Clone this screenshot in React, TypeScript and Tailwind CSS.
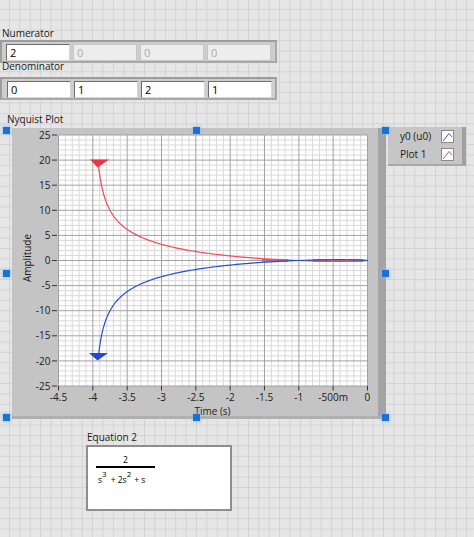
import React from 'react'

// ── Plot mapping (page coordinates) ─────────────────────────────────────────
const X0 = 367.5 // x = 0
const XS = 68.67 // px per unit
const Y0 = 260.5 // y = 0
const YS = 5.02 // px per unit
const px = (x: number) => X0 + x * XS
const py = (y: number) => Y0 - y * YS

function curve(sign: 1 | -1, wStart: number) {
  const pts: string[] = []
  const n = 400
  for (let i = 0; i <= n; i++) {
    const w = wStart * Math.pow(200 / wStart, i / n)
    const d = (1 + w * w) * (1 + w * w)
    const re = -4 / d
    const im = (sign * 2 * (1 - w * w)) / (w * d)
    pts.push(`${px(re).toFixed(2)},${py(im).toFixed(2)}`)
  }
  return 'M' + pts.join(' L')
}

const xTicks = ['-4.5', '-4', '-3.5', '-3', '-2.5', '-2', '-1.5', '-1', '-500m', '0']
const yTicks = ['25', '20', '15', '10', '5', '0', '-5', '-10', '-15', '-20', '-25']

function Cell({ value, disabled }: { value: string; disabled?: boolean }) {
  return disabled ? (
    <div className="h-[17px] w-[64px] border border-[#c6c6c6] bg-[#ededed] pl-[3px] text-[11px] leading-[15px] text-[#ababab]">
      {value}
    </div>
  ) : (
    <div className="h-[17px] w-[64px] border border-t-[#6d6d6d] border-l-[#6d6d6d] border-r-[#d6d6d6] border-b-[#d6d6d6] bg-white pl-[3px] text-[11px] leading-[15px] text-black">
      {value}
    </div>
  )
}

function Handle({ className }: { className: string }) {
  return (
    <div
      className={`absolute h-[7px] w-[7px] bg-[#1a72d6] shadow-[0_0_3px_1px_rgba(140,190,240,0.7)] ${className}`}
    />
  )
}

function LegendIcon({ color }: { color: string }) {
  return (
    <div className="h-[13px] w-[13px] border border-[#8a8a8a] bg-white">
      <svg width="11" height="11" viewBox="0 0 11 11">
        <polyline points="1,10 7,2.5 10,6" fill="none" stroke={color} strokeWidth="1" />
      </svg>
    </div>
  )
}

function Chart() {
  const minorX: number[] = []
  for (let i = 0; i <= 45; i++) minorX.push(58.5 + (i * XS) / 10)
  const minorY: number[] = []
  for (let i = 0; i <= 50; i++) minorY.push(135 + i * YS)

  return (
    <svg width="366" height="288" viewBox="12 128 366 288" className="block">
      {/* plot area */}
      <rect x="58" y="135" width="310" height="251" fill="#ffffff" />
      {minorX.map((x, i) =>
        i % 5 !== 0 ? <line key={`mx${i}`} x1={x} y1="135" x2={x} y2="386" stroke="#d9d9d9" strokeWidth="1" /> : null,
      )}
      {minorY.map((y, i) =>
        i % 5 !== 0 ? <line key={`my${i}`} x1="58" y1={y} x2="368" y2={y} stroke="#d9d9d9" strokeWidth="1" /> : null,
      )}
      {minorX.map((x, i) =>
        i % 5 === 0 ? <line key={`Mx${i}`} x1={x} y1="135" x2={x} y2="386" stroke="#a2a2a2" strokeWidth="1" /> : null,
      )}
      {minorY.map((y, i) =>
        i % 5 === 0 ? <line key={`My${i}`} x1="58" y1={y} x2="368" y2={y} stroke="#a2a2a2" strokeWidth="1" /> : null,
      )}

      {/* y axis */}
      {yTicks.map((t, i) => {
        const y = 135 + i * 25.1
        return (
          <g key={t}>
            <line x1="52" y1={y} x2="57" y2={y} stroke="#333" strokeWidth="1" />
            <text x="50.5" y={y + 3.6} textAnchor="end" fontSize="10" fill="#1a1a1a" fontFamily="'Open Sans', sans-serif">
              {t}
            </text>
          </g>
        )
      })}
      <text
        transform="translate(30.5 258) rotate(-90)"
        textAnchor="middle"
        fontSize="10"
        fill="#1a1a1a"
        fontFamily="'Open Sans', sans-serif"
      >
        Amplitude
      </text>

      {/* x axis */}
      {xTicks.map((t, i) => {
        const x = 58.5 + i * 34.33
        return (
          <g key={t}>
            <line x1={x} y1="386" x2={x} y2="390.5" stroke="#333" strokeWidth="1" />
            <text x={x} y="401" textAnchor="middle" fontSize="10" fill="#1a1a1a" fontFamily="'Open Sans', sans-serif">
              {t}
            </text>
          </g>
        )
      })}
      <text x="212.5" y="414.5" textAnchor="middle" fontSize="10" fill="#1a1a1a" fontFamily="'Open Sans', sans-serif">
        Time (s)
      </text>

      {/* curves */}
      <svg x="58" y="135" width="310" height="251" viewBox="58 135 310 251" overflow="hidden">
        <rect x="313" y="259" width="50" height="3" fill="#d0707a" />
        <rect x="262" y="259.2" width="26" height="2.6" fill="#9a6aa0" />
        <path d={curve(1, 0.0975)} fill="none" stroke="#ee4a58" strokeWidth="1.2" />
        <path d={curve(-1, 0.1)} fill="none" stroke="#2750cc" strokeWidth="1.2" />
        <polygon points="90,159.5 109,159.5 97.5,167.5" fill="#ee3346" />
        <polygon points="89,353 108,353 97.5,360.5" fill="#1f49d8" />
      </svg>
    </svg>
  )
}

export default function App() {
  return (
    <div className="h-[537px] w-[474px] overflow-hidden bg-[#e6e6e6] bg-[linear-gradient(to_right,#d2d2d2_1px,transparent_1px),linear-gradient(to_bottom,#d2d2d2_1px,transparent_1px)] bg-[size:10.4px_10.4px] bg-[position:9px_9px] font-['Open_Sans',sans-serif] text-[#1a1a1a]">
      <div className="flex flex-col items-start">
        {/* Numerator */}
        <div className="pl-[2px] pt-[27px] text-[10px] leading-[13px]">Numerator</div>
        <div className="flex h-[23px] w-[277px] gap-[3px] border-2 border-t-[#9d9d9d] border-l-[#9d9d9d] border-r-[#a8a8a8] border-b-[#a8a8a8] bg-[#cdcdcd] pl-[4px] pt-[2px]">
          <Cell value="2" />
          <Cell value="0" disabled />
          <Cell value="0" disabled />
          <Cell value="0" disabled />
        </div>

        {/* Denominator */}
        <div className="-mt-[3px] pl-[2px] text-[10px] leading-[13px]">Denominator</div>
        <div className="mt-[4px] flex h-[23px] w-[277px] gap-[3px] border-2 border-t-[#9d9d9d] border-l-[#9d9d9d] border-r-[#a8a8a8] border-b-[#a8a8a8] bg-[#cdcdcd] pl-[5px] pt-[2px]">
          <Cell value="0" />
          <Cell value="1" />
          <Cell value="2" />
          <Cell value="1" />
        </div>

        {/* Nyquist graph */}
        <div className="mt-[13px] pl-[7px] text-[10px] leading-[13px]">Nyquist Plot</div>
        <div className="mt-[2px] flex items-start">
          <div className="relative ml-[12px]">
            <div className="border-r-[8px] border-b-[3px] border-r-[#a3a3a3] border-b-[#b0b0b0] bg-[#c4c4c4]">
              <Chart />
            </div>
            <Handle className="-left-[9px] -top-[1px]" />
            <Handle className="left-[181px] -top-[1px]" />
            <Handle className="left-[370px] -top-[1px]" />
            <Handle className="-left-[9px] top-[142px]" />
            <Handle className="left-[370px] top-[142px]" />
            <Handle className="-left-[9px] top-[286px]" />
            <Handle className="left-[181px] top-[286px]" />
            <Handle className="left-[370px] top-[286px]" />
          </div>
          <div className="-mt-[1px] ml-[2px] flex w-[78px] flex-col gap-[5px] border-r-[4px] border-b-[2px] border-r-[#a0a0a0] border-b-[#a8a8a8] bg-[#c6c6c6] py-[3px] pl-[12px] text-[10px]">
            <div className="flex items-center justify-between pr-[8px]">
              <span className="leading-[13px]">y0 (u0)</span>
              <LegendIcon color="#3a5fd0" />
            </div>
            <div className="flex items-center justify-between pr-[8px]">
              <span className="leading-[13px]">Plot 1</span>
              <LegendIcon color="#e2505a" />
            </div>
          </div>
        </div>

        {/* Equation */}
        <div className="mt-[12px] pl-[87px] text-[10px] leading-[13px]">Equation 2</div>
        <div className="ml-[86px] mt-[1px] h-[66px] w-[146px] border-2 border-[#8e8e8e] bg-white pl-[8px] pt-[8px]">
          <div className="flex w-[59px] flex-col items-center text-[8.5px] leading-[10px] text-black">
            <span>2</span>
            <div className="mt-[1px] h-[1.5px] w-full bg-black" />
            <div className="mt-[2px] flex items-start self-start pl-[2px]">
              <span className="mt-[5px]">s</span>
              <span className="text-[8px] leading-[8px]">3</span>
              <span className="ml-[4px] mt-[5px]">+ 2s</span>
              <span className="text-[8px] leading-[8px]">2</span>
              <span className="ml-[3px] mt-[5px]">+ s</span>
            </div>
          </div>
        </div>
      </div>
    </div>
  )
}
